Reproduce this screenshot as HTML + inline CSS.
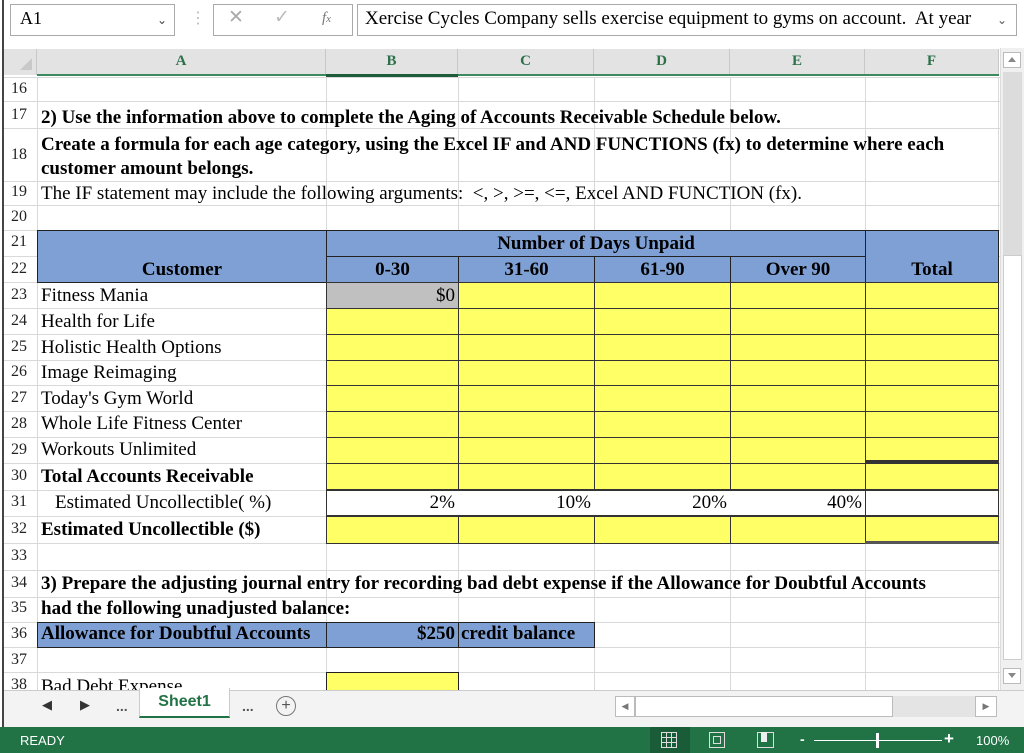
<!DOCTYPE html>
<html><head><meta charset="utf-8"><style>
*{margin:0;padding:0;box-sizing:border-box}
body{width:1024px;height:753px;overflow:hidden;background:#fff;position:relative;font-family:"Liberation Serif",serif;color:#000}
.a{position:absolute}
.h{position:absolute;left:0;width:999px;height:1px;background:#d9d9d9}
.v{position:absolute;top:77px;height:613px;width:1px;background:#d9d9d9}
.rn{position:absolute;left:11px;width:30px;font-size:16px;line-height:16px;color:#222}
.t{position:absolute;font-size:19px;line-height:21px;white-space:nowrap}
.b{font-weight:bold}
.c{position:absolute;border:1px solid #222}
.y{background:#ffff66}
.bl{background:#7fa0d4}
.ch{position:absolute;top:49px;height:26px;font:bold 15px "Liberation Serif",serif;color:#2a7148;text-align:center;line-height:24px;background:#e3e3e3;border-right:1px solid #c8c8c8}
</style></head><body>
<div class="a" style="left:0;top:0;width:1024px;height:42px;background:#fff"></div>
<div class="a" style="left:2px;top:0;width:2px;height:753px;background:#444"></div>
<div class="a" style="left:10px;top:4px;width:165px;height:32px;border:1px solid #aaa"></div>
<div class="t" style="left:20px;top:8px;font-size:18px">A1</div>
<div class="t" style="left:157px;top:10px;font-size:12px;color:#444">&#8964;</div>
<div class="t" style="left:190px;top:8px;color:#bbb;font-size:16px">&#8942;</div>
<div class="a" style="left:213px;top:4px;width:140px;height:32px;border:1px solid #aaa"></div>
<div class="t" style="left:228px;top:7px;color:#aaa;font-size:19px;font-family:'DejaVu Sans'">&#10005;</div>
<div class="t" style="left:274px;top:7px;color:#bbb;font-size:19px;font-family:'DejaVu Sans'">&#10003;</div>
<div class="t" style="left:322px;top:8px;color:#777;font-size:15px;font-style:italic">f<span style="font-size:11px">x</span></div>
<div class="a" style="left:357px;top:4px;width:660px;height:32px;border:1px solid #aaa"></div>
<div class="t" style="left:365px;top:8px;font-size:19px">Xercise Cycles Company sells exercise equipment to gyms on account.&nbsp; At year</div>
<div class="t" style="left:997px;top:10px;font-size:12px;color:#555">&#8964;</div>
<div class="a" style="left:4px;top:49px;width:33px;height:26px;background:#e3e3e3;border-right:1px solid #c8c8c8"></div>
<div class="a" style="left:20px;top:58px;width:0;height:0;border-left:12px solid transparent;border-bottom:12px solid #c9c9c9"></div>
<div class="ch" style="left:37px;width:289px">A</div>
<div class="ch" style="left:326px;width:132px">B</div>
<div class="ch" style="left:458px;width:136px">C</div>
<div class="ch" style="left:594px;width:136px">D</div>
<div class="ch" style="left:730px;width:135px">E</div>
<div class="ch" style="left:865px;width:134px">F</div>
<div class="a" style="left:37px;top:74px;width:962px;height:2px;background:#3e8a5f"></div>
<div class="a" style="left:326px;top:74px;width:132px;height:3px;background:#1e5b38"></div>
<div class="h" style="left:4px;top:77px"></div><div class="h" style="left:4px;top:101px"></div><div class="h" style="left:4px;top:128px"></div><div class="h" style="left:4px;top:181px"></div><div class="h" style="left:4px;top:205px"></div><div class="h" style="left:4px;top:230px"></div><div class="h" style="left:4px;top:256px"></div><div class="h" style="left:4px;top:282px"></div><div class="h" style="left:4px;top:308px"></div><div class="h" style="left:4px;top:334px"></div><div class="h" style="left:4px;top:360px"></div><div class="h" style="left:4px;top:385px"></div><div class="h" style="left:4px;top:411px"></div><div class="h" style="left:4px;top:437px"></div><div class="h" style="left:4px;top:463px"></div><div class="h" style="left:4px;top:490px"></div><div class="h" style="left:4px;top:516px"></div><div class="h" style="left:4px;top:543px"></div><div class="h" style="left:4px;top:570px"></div><div class="h" style="left:4px;top:597px"></div><div class="h" style="left:4px;top:622px"></div><div class="h" style="left:4px;top:647px"></div><div class="h" style="left:4px;top:672px"></div>
<div class="v" style="left:37px"></div><div class="v" style="left:326px"></div><div class="v" style="left:458px"></div><div class="v" style="left:594px"></div><div class="v" style="left:730px"></div><div class="v" style="left:865px"></div><div class="v" style="left:998px"></div>
<div class="rn" style="top:81px">16</div><div class="rn" style="top:107px">17</div><div class="rn" style="top:147px">18</div><div class="rn" style="top:184px">19</div><div class="rn" style="top:209px">20</div><div class="rn" style="top:234px">21</div><div class="rn" style="top:261px">22</div><div class="rn" style="top:287px">23</div><div class="rn" style="top:313px">24</div><div class="rn" style="top:339px">25</div><div class="rn" style="top:364px">26</div><div class="rn" style="top:390px">27</div><div class="rn" style="top:416px">28</div><div class="rn" style="top:442px">29</div><div class="rn" style="top:468px">30</div><div class="rn" style="top:494px">31</div><div class="rn" style="top:521px">32</div><div class="rn" style="top:548px">33</div><div class="rn" style="top:575px">34</div><div class="rn" style="top:600px">35</div><div class="rn" style="top:626px">36</div><div class="rn" style="top:652px">37</div><div class="rn" style="top:677px">38</div>
<div class="t b" style="left:41px;top:107px">2) Use the information above to complete the Aging of Accounts Receivable Schedule below.</div>
<div class="t b" style="left:41px;top:134px">Create a formula for each age category, using the Excel IF and AND FUNCTIONS (fx) to determine where each</div>
<div class="t b" style="left:41px;top:158px">customer amount belongs.</div>
<div class="t" style="left:41px;top:183px">The IF statement may include the following arguments:&nbsp; &lt;, &gt;, &gt;=, &lt;=, Excel AND FUNCTION (fx).</div>
<div class="c bl" style="left:37px;top:230px;width:290px;height:53px"></div>
<div class="c bl" style="left:326px;top:230px;width:540px;height:27px"></div>
<div class="c bl" style="left:326px;top:256px;width:133px;height:27px"></div>
<div class="c bl" style="left:458px;top:256px;width:137px;height:27px"></div>
<div class="c bl" style="left:594px;top:256px;width:137px;height:27px"></div>
<div class="c bl" style="left:730px;top:256px;width:136px;height:27px"></div>
<div class="c bl" style="left:865px;top:230px;width:134px;height:53px"></div>
<div class="t b" style="left:37px;top:259px;width:290px;text-align:center">Customer</div>
<div class="t b" style="left:326px;top:233px;width:540px;text-align:center">Number of Days Unpaid</div>
<div class="t b" style="left:326px;top:259px;width:133px;text-align:center">0-30</div>
<div class="t b" style="left:458px;top:259px;width:137px;text-align:center">31-60</div>
<div class="t b" style="left:594px;top:259px;width:137px;text-align:center">61-90</div>
<div class="t b" style="left:730px;top:259px;width:136px;text-align:center">Over 90</div>
<div class="t b" style="left:865px;top:259px;width:134px;text-align:center">Total</div>
<div class="c y" style="left:326px;top:282px;width:673px;height:208px;border-color:#333"></div>
<div class="a" style="left:327px;top:283px;width:131px;height:25px;background:#c0c0c0"></div>
<div class="a" style="left:326px;top:308px;width:673px;height:1px;background:#333"></div>
<div class="a" style="left:326px;top:334px;width:673px;height:1px;background:#333"></div>
<div class="a" style="left:326px;top:360px;width:673px;height:1px;background:#333"></div>
<div class="a" style="left:326px;top:385px;width:673px;height:1px;background:#333"></div>
<div class="a" style="left:326px;top:411px;width:673px;height:1px;background:#333"></div>
<div class="a" style="left:326px;top:437px;width:673px;height:1px;background:#333"></div>
<div class="a" style="left:326px;top:463px;width:673px;height:1px;background:#333"></div>
<div class="a" style="left:865px;top:460px;width:134px;height:3px;background:#333"></div>
<div class="a" style="left:458px;top:282px;width:1px;height:208px;background:#333"></div>
<div class="a" style="left:594px;top:282px;width:1px;height:208px;background:#333"></div>
<div class="a" style="left:730px;top:282px;width:1px;height:208px;background:#333"></div>
<div class="a" style="left:865px;top:282px;width:1px;height:208px;background:#333"></div>
<div class="t" style="left:326px;top:285px;width:129px;text-align:right">$0</div>
<div class="t" style="left:41px;top:285px">Fitness Mania</div>
<div class="t" style="left:41px;top:311px">Health for Life</div>
<div class="t" style="left:41px;top:337px">Holistic Health Options</div>
<div class="t" style="left:41px;top:362px">Image Reimaging</div>
<div class="t" style="left:41px;top:388px">Today's Gym World</div>
<div class="t" style="left:41px;top:413px">Whole Life Fitness Center</div>
<div class="t" style="left:41px;top:439px">Workouts Unlimited</div>
<div class="t b" style="left:41px;top:466px">Total Accounts Receivable</div>
<div class="a" style="left:326px;top:490px;width:673px;height:26px;border:1px solid #333;background:#fff"></div>
<div class="a" style="left:865px;top:490px;width:1px;height:26px;background:#333"></div>
<div class="t" style="left:55px;top:492px">Estimated Uncollectible( %)</div>
<div class="t" style="left:326px;top:492px;width:129px;text-align:right">2%</div>
<div class="t" style="left:458px;top:492px;width:133px;text-align:right">10%</div>
<div class="t" style="left:594px;top:492px;width:133px;text-align:right">20%</div>
<div class="t" style="left:730px;top:492px;width:132px;text-align:right">40%</div>
<div class="c y" style="left:326px;top:516px;width:673px;height:28px;border-color:#333"></div>
<div class="a" style="left:458px;top:516px;width:1px;height:27px;background:#333"></div>
<div class="a" style="left:594px;top:516px;width:1px;height:27px;background:#333"></div>
<div class="a" style="left:730px;top:516px;width:1px;height:27px;background:#333"></div>
<div class="a" style="left:865px;top:516px;width:1px;height:27px;background:#333"></div>
<div class="a" style="left:865px;top:541px;width:134px;height:3px;background:#555"></div>
<div class="t b" style="left:41px;top:519px">Estimated Uncollectible ($)</div>
<div class="t b" style="left:41px;top:573px">3) Prepare the adjusting journal entry for recording bad debt expense if the Allowance for Doubtful Accounts</div>
<div class="t b" style="left:41px;top:598px">had the following unadjusted balance:</div>
<div class="c bl" style="left:37px;top:622px;width:290px;height:26px"></div>
<div class="c bl" style="left:326px;top:622px;width:133px;height:26px"></div>
<div class="c bl" style="left:458px;top:622px;width:137px;height:26px"></div>
<div class="t b" style="left:41px;top:623px">Allowance for Doubtful Accounts</div>
<div class="t b" style="left:326px;top:623px;width:129px;text-align:right">$250</div>
<div class="t b" style="left:461px;top:623px">credit balance</div>
<div class="c y" style="left:326px;top:672px;width:133px;height:20px"></div>
<div class="t" style="left:41px;top:676px">Bad Debt Expense</div>
<div class="a" style="left:1000px;top:48px;width:24px;height:642px;background:#f0f0f0;border-left:1px solid #ddd"></div>
<div class="a" style="left:1003px;top:52px;width:18px;height:16px;border:1px solid #bbb;background:#fff"></div>
<div class="a" style="left:1008px;top:57px;border-left:4px solid transparent;border-right:4px solid transparent;border-bottom:5px solid #888"></div>
<div class="a" style="left:1003px;top:72px;width:19px;height:183px;background:#dcdcdc"></div>
<div class="a" style="left:1003px;top:255px;width:19px;height:405px;background:#fff;border:1px solid #ccc"></div>
<div class="a" style="left:1003px;top:668px;width:18px;height:16px;border:1px solid #bbb;background:#fff"></div>
<div class="a" style="left:1008px;top:673px;border-left:4px solid transparent;border-right:4px solid transparent;border-top:5px solid #888"></div>
<div class="a" style="left:4px;top:690px;width:1020px;height:37px;background:#f3f3f3;border-top:1px solid #ccc"></div>
<div class="t" style="left:42px;top:697px;font:13px 'Liberation Sans',sans-serif;color:#333">&#9664;</div>
<div class="t" style="left:80px;top:697px;font:13px 'Liberation Sans',sans-serif;color:#333">&#9654;</div>
<div class="t" style="left:116px;top:698px;font:bold 14px 'Liberation Sans',sans-serif;color:#555">...</div>
<div class="a" style="left:139px;top:688px;width:91px;height:30px;background:#fff;border-bottom:2px solid #217346;border-left:1px solid #ccc;border-right:1px solid #ccc"></div>
<div class="t" style="left:139px;top:693px;width:91px;text-align:center;font:bold 16px 'Liberation Sans',sans-serif;color:#217346">Sheet1</div>
<div class="t" style="left:242px;top:698px;font:bold 14px 'Liberation Sans',sans-serif;color:#555">...</div>
<div class="a" style="left:276px;top:696px;width:20px;height:20px;border:1px solid #777;border-radius:50%;text-align:center;font:16px/18px 'Liberation Sans',sans-serif;color:#555">+</div>
<div class="a" style="left:615px;top:696px;width:20px;height:21px;border:1px solid #bbb;background:#fff;font-size:9px;color:#777;text-align:center;line-height:19px">&#9664;</div>
<div class="a" style="left:635px;top:696px;width:258px;height:21px;border:1px solid #bbb;background:#fff"></div>
<div class="a" style="left:893px;top:696px;width:82px;height:21px;background:#e4e4e4"></div>
<div class="a" style="left:975px;top:696px;width:22px;height:21px;border:1px solid #bbb;background:#fff;font-size:9px;color:#777;text-align:center;line-height:19px">&#9654;</div>
<div class="a" style="left:0;top:727px;width:1024px;height:26px;background:#217346"></div>
<div class="t" style="left:20px;top:733px;font:13px 'Liberation Sans',sans-serif;color:#fff">READY</div>
<div class="a" style="left:650px;top:727px;width:40px;height:26px;background:#195c37"></div>
<div class="a" style="left:661px;top:732px;width:16px;height:16px;border:1px solid #ddd;background:repeating-linear-gradient(90deg,transparent 0 4px,#ddd 4px 5px),repeating-linear-gradient(0deg,transparent 0 4px,#ddd 4px 5px)"></div>
<div class="a" style="left:709px;top:732px;width:16px;height:16px;border:1px solid #ddd"></div>
<div class="a" style="left:713px;top:736px;width:8px;height:8px;border:1px solid #ddd"></div>
<div class="a" style="left:757px;top:732px;width:17px;height:16px;border:1px solid #ddd"></div>
<div class="a" style="left:761px;top:732px;width:6px;height:10px;background:#eee"></div>
<div class="t" style="left:800px;top:731px;font:bold 14px 'Liberation Sans',sans-serif;color:#fff">-</div>
<div class="a" style="left:814px;top:740px;width:128px;height:1px;background:#fff"></div>
<div class="a" style="left:876px;top:733px;width:3px;height:15px;background:#fff"></div>
<div class="t" style="left:944px;top:729px;font:bold 17px 'Liberation Sans',sans-serif;color:#fff">+</div>
<div class="t" style="left:976px;top:733px;font:13px 'Liberation Sans',sans-serif;color:#fff">100%</div>
</body></html>
